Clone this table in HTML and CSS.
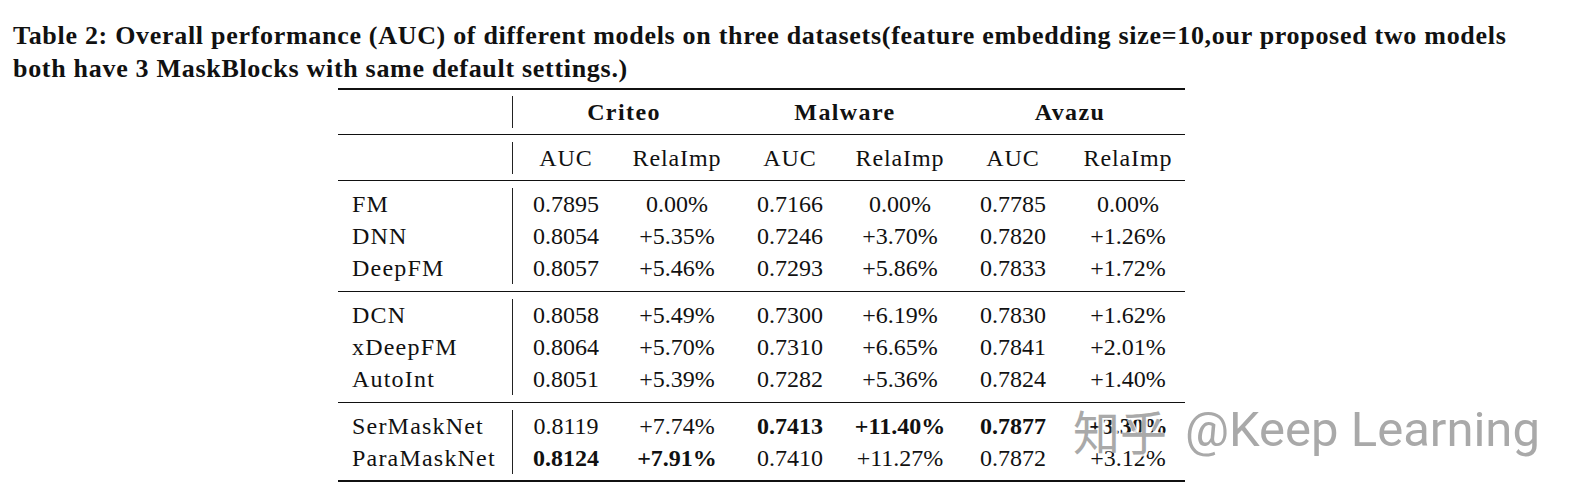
FILE: index.html
```html
<!DOCTYPE html>
<html>
<head>
<meta charset="utf-8">
<link rel="stylesheet" href="styles.css">
</head>
<body>
<div class="page">
  <p class="caption">Table 2: Overall performance (AUC) of different models on three datasets(feature embedding size=10,our proposed two models<br>both have 3 MaskBlocks with same default settings.)</p>
  <div class="tbl">
    <div class="grp g-head">
      <div class="row">
        <div class="lab"></div>
        <div class="ds span2">Criteo</div>
        <div class="ds span2">Malware</div>
        <div class="ds span2">Avazu</div>
      </div>
    </div>
    <div class="grp g-sub">
      <div class="row">
        <div class="lab"></div>
        <div class="c sub">AUC</div><div class="c sub">RelaImp</div>
        <div class="c sub">AUC</div><div class="c sub">RelaImp</div>
        <div class="c sub">AUC</div><div class="c sub">RelaImp</div>
      </div>
    </div>
    <div class="grp g-wide">
      <div class="row">
        <div class="lab">FM</div>
        <div class="c">0.7895</div><div class="c">0.00%</div>
        <div class="c">0.7166</div><div class="c">0.00%</div>
        <div class="c">0.7785</div><div class="c">0.00%</div>
      </div>
      <div class="row">
        <div class="lab">DNN</div>
        <div class="c">0.8054</div><div class="c">+5.35%</div>
        <div class="c">0.7246</div><div class="c">+3.70%</div>
        <div class="c">0.7820</div><div class="c">+1.26%</div>
      </div>
      <div class="row">
        <div class="lab">DeepFM</div>
        <div class="c">0.8057</div><div class="c">+5.46%</div>
        <div class="c">0.7293</div><div class="c">+5.86%</div>
        <div class="c">0.7833</div><div class="c">+1.72%</div>
      </div>
    </div>
    <div class="grp g-wide">
      <div class="row">
        <div class="lab">DCN</div>
        <div class="c">0.8058</div><div class="c">+5.49%</div>
        <div class="c">0.7300</div><div class="c">+6.19%</div>
        <div class="c">0.7830</div><div class="c">+1.62%</div>
      </div>
      <div class="row">
        <div class="lab">xDeepFM</div>
        <div class="c">0.8064</div><div class="c">+5.70%</div>
        <div class="c">0.7310</div><div class="c">+6.65%</div>
        <div class="c">0.7841</div><div class="c">+2.01%</div>
      </div>
      <div class="row">
        <div class="lab">AutoInt</div>
        <div class="c">0.8051</div><div class="c">+5.39%</div>
        <div class="c">0.7282</div><div class="c">+5.36%</div>
        <div class="c">0.7824</div><div class="c">+1.40%</div>
      </div>
    </div>
    <div class="grp g-last">
      <div class="row">
        <div class="lab">SerMaskNet</div>
        <div class="c">0.8119</div><div class="c">+7.74%</div>
        <div class="c b">0.7413</div><div class="c b">+11.40%</div>
        <div class="c b">0.7877</div><div class="c b">+3.30%</div>
      </div>
      <div class="row">
        <div class="lab">ParaMaskNet</div>
        <div class="c b">0.8124</div><div class="c b">+7.91%</div>
        <div class="c">0.7410</div><div class="c">+11.27%</div>
        <div class="c">0.7872</div><div class="c">+3.12%</div>
      </div>
    </div>
    <div class="watermark"><span class="wm-cjk">知乎</span><span class="wm-name">@Keep Learning</span></div>
  </div>
</div>
</body>
</html>
```
FILE: styles.css
```css
html, body {
  margin: 0;
  padding: 0;
  background: #ffffff;
}
.page {
  width: 1576px;
  height: 504px;
  overflow: hidden;
  color: #111111;
  font-family: "Liberation Serif", "Times New Roman", serif;
}
.caption {
  margin: 0;
  padding: 19px 0 0 13px;
  font-weight: bold;
  font-size: 26px;
  line-height: 33px;
  letter-spacing: 0.7px;
  white-space: nowrap;
}
.tbl {
  position: relative;
  margin: 3px 0 0 338px;
  width: 847px;
  border-top: 2px solid #111;
}
.grp {
  padding: 7px 0 6px;
  border-bottom: 1px solid #111;
}
.g-head {
  padding: 6px 0 6px;
}
.g-wide {
  padding: 7px 0 7px;
}
.g-last {
  padding: 7px 0 6px;
  border-bottom: 2px solid #111;
}
.row {
  display: grid;
  grid-template-columns: 175px 106px 116px 110px 110px 116px 114px;
  height: 32px;
  align-items: stretch;
  font-size: 24px;
  line-height: 32px;
}
.lab {
  border-right: 1px solid #222;
  padding-left: 14px;
  letter-spacing: 1.2px;
  white-space: nowrap;
}
.c {
  text-align: center;
  white-space: nowrap;
}
.sub {
  letter-spacing: 0.9px;
}
.ds {
  text-align: center;
  font-weight: bold;
  letter-spacing: 1.4px;
}
.span2 {
  grid-column: span 2;
}
.b {
  font-weight: bold;
}
.watermark {
  position: absolute;
  left: 735px;
  top: 315px;
  display: flex;
  align-items: center;
  gap: 18px;
  color: #a9a9a9;
  font-size: 49px;
  line-height: 50px;
  white-space: nowrap;
  text-shadow: 2px 2px 0 rgba(255,255,255,0.9), -1px -1px 0 rgba(255,255,255,0.6);
}
.wm-cjk {
  font-family: "Noto Sans CJK SC", sans-serif;
  font-size: 47px;
}
.wm-name {
  font-family: Roboto, "Noto Sans", sans-serif;
  font-weight: 400;
}
```
